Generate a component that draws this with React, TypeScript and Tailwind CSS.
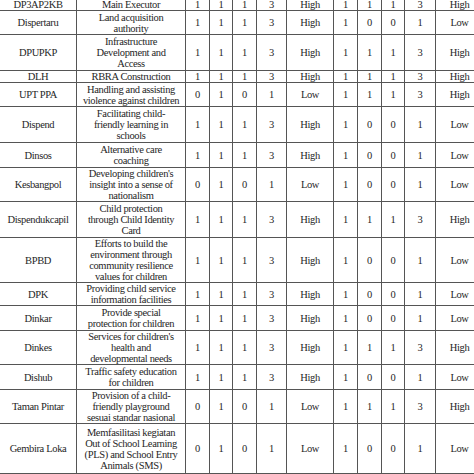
type Row = {
  agency: string;
  role: string[];
  a: (number | string)[];
  b: (number | string)[];
  h: string;
};

const HIGH = [1, 1, 1, 3, "High"];
const LOW_A = [0, 1, 0, 1, "Low"];
const LOW_B = [1, 0, 0, 1, "Low"];

const ROWS: Row[] = [
  { agency: "DP3AP2KB", role: ["Main Executor"], a: HIGH, b: HIGH, h: "h-[12px]" },
  { agency: "Dispertaru", role: ["Land acquisition", "authority"], a: HIGH, b: LOW_B, h: "h-[24px]" },
  { agency: "DPUPKP", role: ["Infrastructure", "Development and", "Access"], a: HIGH, b: HIGH, h: "h-[36px]" },
  { agency: "DLH", role: ["RBRA Construction"], a: HIGH, b: HIGH, h: "h-[12px]" },
  { agency: "UPT PPA", role: ["Handling and assisting", "violence against children"], a: LOW_A, b: HIGH, h: "h-[24px]" },
  { agency: "Dispend", role: ["Facilitating child-", "friendly learning in", "schools"], a: HIGH, b: LOW_B, h: "h-[36px]" },
  { agency: "Dinsos", role: ["Alternative care", "coaching"], a: HIGH, b: LOW_B, h: "h-[25px]" },
  { agency: "Kesbangpol", role: ["Developing children's", "insight into a sense of", "nationalism"], a: LOW_A, b: LOW_B, h: "h-[34px]" },
  { agency: "Dispendukcapil", role: ["Child protection", "through Child Identity", "Card"], a: HIGH, b: HIGH, h: "h-[36px]" },
  { agency: "BPBD", role: ["Efforts to build the", "environment through", "community resilience", "values for children"], a: HIGH, b: LOW_B, h: "h-[45px]" },
  { agency: "DPK", role: ["Providing child service", "information facilities"], a: HIGH, b: LOW_B, h: "h-[23px]" },
  { agency: "Dinkar", role: ["Provide special", "protection for children"], a: HIGH, b: LOW_B, h: "h-[25px]" },
  { agency: "Dinkes", role: ["Services for children's", "health and", "developmental needs"], a: HIGH, b: HIGH, h: "h-[34px]" },
  { agency: "Dishub", role: ["Traffic safety education", "for children"], a: HIGH, b: LOW_B, h: "h-[25px]" },
  { agency: "Taman Pintar", role: ["Provision of a child-", "friendly playground", "sesuai standar nasional"], a: LOW_A, b: HIGH, h: "h-[34px]" },
  { agency: "Gembira Loka", role: ["Memfasilitasi kegiatan", "Out of School Learning", "(PLS) and School Entry", "Animals (SMS)"], a: LOW_A, b: LOW_B, h: "h-[50px]" },
];

const cell = "border border-[#555] p-0 text-center align-middle";

export default function App() {
  return (
    <div className="w-[474px] h-[474px] overflow-hidden bg-white">
      <table
        className="table-fixed border-collapse w-[484px] -mt-[2px] -ml-[1px] text-[10.5px] leading-[11px] text-[#262626] tracking-[-0.35px]"
        style={{ fontFamily: '"Liberation Serif", "Times New Roman", serif' }}
      >
        <colgroup>
          <col className="w-[77px]" />
          <col className="w-[109px]" />
          <col className="w-[24px]" />
          <col className="w-[23px]" />
          <col className="w-[24px]" />
          <col className="w-[30px]" />
          <col className="w-[47px]" />
          <col className="w-[24px]" />
          <col className="w-[24px]" />
          <col className="w-[23px]" />
          <col className="w-[31px]" />
          <col className="w-[48px]" />
        </colgroup>
        <tbody>
          {ROWS.map(r => (
            <tr key={r.agency} className={r.h}>
              <td className={cell}>{r.agency}</td>
              <td className={cell}>
                {r.role.map((line, i) => (
                  <div key={i} className="whitespace-nowrap">{line}</div>
                ))}
              </td>
              {r.a.map((v, i) => (
                <td key={"a" + i} className={cell}>{v}</td>
              ))}
              {r.b.map((v, i) => (
                <td key={"b" + i} className={cell}>{v}</td>
              ))}
            </tr>
          ))}
        </tbody>
      </table>
    </div>
  );
}
